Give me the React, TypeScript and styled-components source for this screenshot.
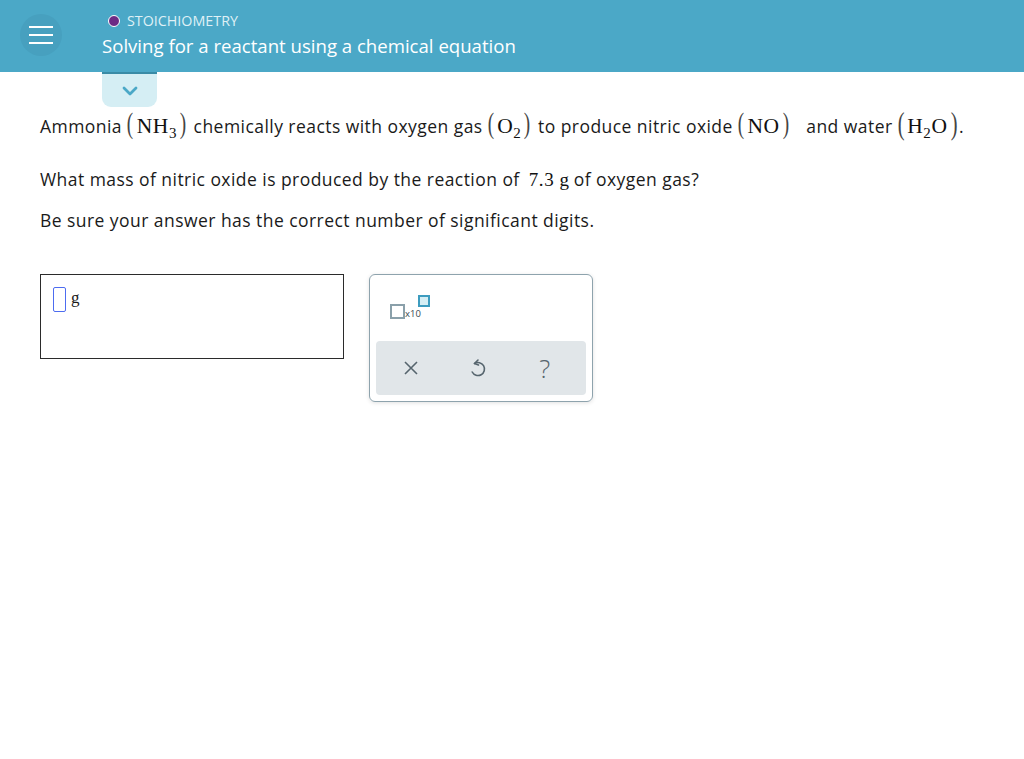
import React from 'react';
import styled, { createGlobalStyle } from 'styled-components';

const Global = createGlobalStyle`
    html, body {
        margin: 0;
        padding: 0;
        background: #ffffff;
    }
    body {
        font-family: "Open Sans", sans-serif;
    }
`;

const Page = styled.div`
    width: 1024px;
    min-height: 759px;
    position: relative;
`;

const Header = styled.header`
    height: 72px;
    background-color: #4ba8c7;
    display: flex;
    align-items: center;
    padding-left: 20px;
    box-sizing: border-box;
`;

const MenuButton = styled.div`
    width: 42px;
    height: 42px;
    border-radius: 50%;
    background-color: #47a0bf;
    display: flex;
    flex-direction: column;
    justify-content: center;
    align-items: center;
    gap: 6px;
    margin-right: 40px;
    margin-top: -3px;
`;

const MenuLine = styled.span`
    display: block;
    width: 24px;
    height: 2px;
    background: #ffffff;
`;

const Titles = styled.div`
    display: flex;
    flex-direction: column;
    font-family: "Open Sans", sans-serif;
    margin-top: -4px;
`;

const Topic = styled.div`
    display: flex;
    align-items: center;
    gap: 7px;
    color: #dff0f6;
    font-size: 14.3px;
    height: 20px;
    padding-left: 6px;
`;

const Dot = styled.span`
    width: 12px;
    height: 12px;
    border-radius: 50%;
    background: #6d2a85;
    border: 1.5px solid #ffffff;
    box-sizing: border-box;
`;

const Title = styled.div`
    color: #ffffff;
    font-size: 18.6px;
    font-weight: 500;
    margin-top: 2px;
`;

const Tab = styled.div`
    margin-left: 102px;
    width: 55px;
    height: 35px;
    background: #d5eef4;
    border-top: 2px solid #3a8ba6;
    border-radius: 0 0 9px 9px;
    box-sizing: border-box;
    display: flex;
    justify-content: center;
    align-items: center;
`;

const Content = styled.main`
    padding: 7px 40px 0;
    color: #1a1a1a;
    font-family: "Open Sans", sans-serif;
    font-size: 17.5px;
    letter-spacing: 0.45px;
`;

const Para = styled.p<{ $gap?: number }>`
    margin: ${p => p.$gap ?? 0}px 0 0;
    line-height: 24px;
    height: 24px;
    white-space: nowrap;
`;

const Formula = styled.span<{ $size?: number; $left?: number }>`
    font-family: "Liberation Serif", "Times New Roman", serif;
    font-size: ${p => p.$size ?? 21.5}px;
    letter-spacing: 0.6px;
    line-height: 0;
    margin: 0 4px 0 ${p => p.$left ?? 2}px;
    color: #111;
`;

const Paren = styled.span<{ $big?: boolean }>`
    font-family: "Liberation Serif", serif;
    font-size: 24px;
    line-height: 0;
    color: #444;
    display: inline-block;
    transform: ${p => (p.$big ? 'scale(0.85, 1.35)' : 'scale(0.8, 1.2)')} translateY(-1px);
    margin: 0 2px;
`;

const Sub = styled.sub`
    font-size: 15px;
    vertical-align: -5px;
    line-height: 0;
`;

const Period = styled.span`
    margin-left: -5px;
`;

const AnswerRow = styled.div`
    display: flex;
    gap: 25px;
    margin-top: 42px;
    align-items: flex-start;
    letter-spacing: 0;
`;

const AnswerBox = styled.div`
    width: 304px;
    height: 85px;
    border: 1px solid #2b2b2b;
    box-sizing: border-box;
    padding: 12px 0 0 12px;
    display: flex;
    align-items: flex-start;
    gap: 5px;
`;

const Cursor = styled.span`
    width: 13px;
    height: 25px;
    border: 1.5px solid #4d6cf0;
    border-radius: 2px;
    box-sizing: border-box;
`;

const Unit = styled.span`
    font-family: "Liberation Serif", serif;
    font-size: 17px;
    line-height: 22px;
`;

const Keypad = styled.div`
    width: 224px;
    height: 128px;
    border: 1px solid #8ea3ad;
    border-radius: 6px;
    box-sizing: border-box;
    box-shadow: 0 1px 4px rgba(0, 0, 0, 0.12);
    padding: 0 6px 6px;
    display: flex;
    flex-direction: column;
`;

const KeyRow = styled.div`
    height: 66px;
    display: flex;
    align-items: flex-start;
    padding: 20px 0 0 14px;
    box-sizing: border-box;
`;

const Sci = styled.div`
    position: relative;
    display: flex;
    align-items: flex-end;
    margin-top: 9px;
`;

const SlotBox = styled.span<{ $small?: boolean }>`
    display: block;
    width: ${p => (p.$small ? 12 : 15)}px;
    height: ${p => (p.$small ? 12 : 15)}px;
    border: 2px solid ${p => (p.$small ? '#3d9cbf' : '#8aa0aa')};
    background: ${p => (p.$small ? '#d5eef4' : '#ffffff')};
    box-sizing: border-box;
`;

const Times = styled.span`
    font-family: "Open Sans", sans-serif;
    font-size: 9.5px;
    color: #3a4a52;
    line-height: 10px;
`;

const Exponent = styled.span`
    position: absolute;
    left: 28px;
    top: -9px;
`;

const ActionBar = styled.div`
    flex: 1;
    background: #e1e6e9;
    border-radius: 4px;
    display: flex;
    justify-content: space-around;
    align-items: center;
    padding: 0 8px 0 2px;
`;

const Action = styled.span`
    width: 24px;
    height: 24px;
    display: flex;
    align-items: center;
    justify-content: center;
    color: #56656e;
    font-family: "Open Sans", sans-serif;
    font-size: 26px;
    font-weight: 300;
`;

export default function App() {
    return (
        <Page>
            <Global />
            <Header>
                <MenuButton>
                    <MenuLine />
                    <MenuLine />
                    <MenuLine />
                </MenuButton>
                <Titles>
                    <Topic>
                        <Dot />
                        STOICHIOMETRY
                    </Topic>
                    <Title>Solving for a reactant using a chemical equation</Title>
                </Titles>
            </Header>
            <Tab>
                <svg width="18" height="12" viewBox="0 0 18 12">
                    <path d="M3 3 L9 9 L15 3" fill="none" stroke="#4ba8c7" strokeWidth="2.8" strokeLinecap="round" strokeLinejoin="round" />
                </svg>
            </Tab>
            <Content>
                <Para>
                    Ammonia
                    <Formula>
                        <Paren>(</Paren>NH<Sub>3</Sub>
                        <Paren>)</Paren>
                    </Formula>
                    chemically reacts with oxygen gas
                    <Formula>
                        <Paren>(</Paren>O<Sub>2</Sub>
                        <Paren>)</Paren>
                    </Formula>
                    to produce nitric oxide
                    <Formula>
                        <Paren>(</Paren>NO<Paren>)</Paren>
                    </Formula>
                    &nbsp; and water
                    <Formula>
                        <Paren $big>(</Paren>H<Sub>2</Sub>O<Paren $big>)</Paren>
                    </Formula>
                    <Period>.</Period>
                </Para>
                <Para $gap={29}>
                    What mass of nitric oxide is produced by the reaction of
                    <Formula $size={19} $left={9}>
                        7.3 g
                    </Formula>
                    of oxygen gas?
                </Para>
                <Para $gap={17}>Be sure your answer has the correct number of significant digits.</Para>
                <AnswerRow>
                    <AnswerBox>
                        <Cursor />
                        <Unit>g</Unit>
                    </AnswerBox>
                    <Keypad>
                        <KeyRow>
                            <Sci>
                                <SlotBox />
                                <Times>x10</Times>
                                <Exponent>
                                    <SlotBox $small />
                                </Exponent>
                            </Sci>
                        </KeyRow>
                        <ActionBar>
                            <Action>
                                <svg width="16" height="16" viewBox="0 0 16 16">
                                    <path d="M2 2 L14 14 M14 2 L2 14" stroke="#56656e" strokeWidth="1.6" />
                                </svg>
                            </Action>
                            <Action>
                                <svg width="18" height="22" viewBox="0 0 18 22">
                                    <path d="M5.5 6.5 A6.5 6.5 0 1 1 3.2 15" fill="none" stroke="#56656e" strokeWidth="1.6" strokeLinecap="round" />
                                    <path d="M9 3 L5.5 6.5 L9.5 8" fill="none" stroke="#56656e" strokeWidth="1.6" strokeLinecap="round" strokeLinejoin="round" />
                                </svg>
                            </Action>
                            <Action>?</Action>
                        </ActionBar>
                    </Keypad>
                </AnswerRow>
            </Content>
        </Page>
    );
}
